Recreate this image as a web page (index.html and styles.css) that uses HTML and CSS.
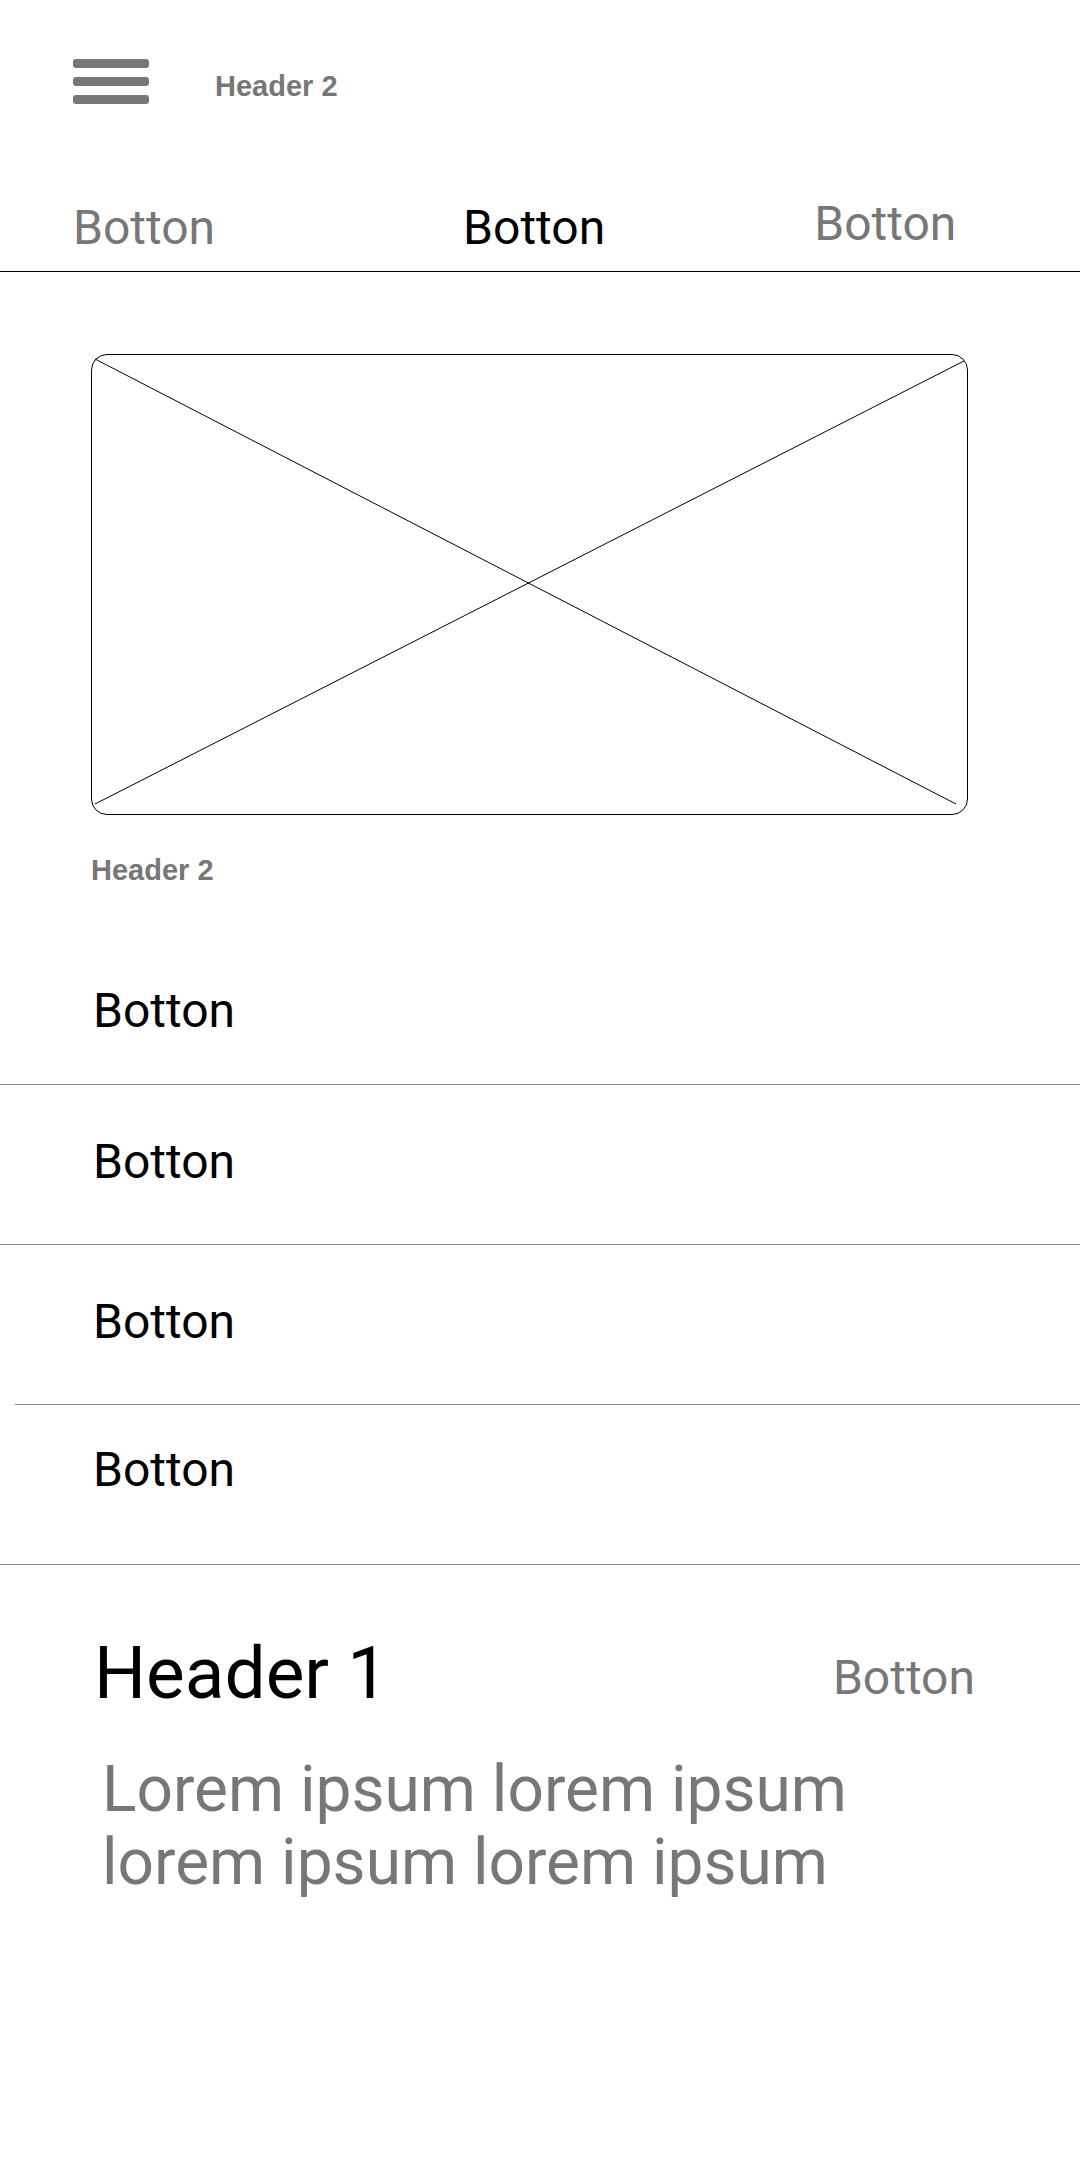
FILE: index.html
```html
<!DOCTYPE html>
<html>
<head>
  <meta charset="utf-8">
  <link rel="stylesheet" href="styles.css">
</head>
<body>
  <div class="header">
    <div class="menu-btn">
      <span></span>
      <span></span>
      <span></span>
    </div>
    <h2 class="header-title">Header 2</h2>
  </div>

  <div class="tabs">
    <span class="tab">Botton</span>
    <span class="tab tab-current">Botton</span>
    <span class="tab tab-last">Botton</span>
  </div>

  <div class="placeholder">
    <svg viewBox="0 0 877 461" preserveAspectRatio="none">
      <line x1="3" y1="4" x2="866" y2="451" />
      <line x1="3" y1="451" x2="874" y2="6" />
    </svg>
  </div>
  <h2 class="caption">Header 2</h2>

  <div class="list">
    <div class="list-row">Botton</div>
    <div class="list-row">Botton</div>
    <div class="list-row list-row-inset">Botton</div>
    <div class="list-row">Botton</div>
  </div>

  <div class="section">
    <div class="section-head">
      <h1>Header 1</h1>
      <span class="section-link">Botton</span>
    </div>
    <p class="section-text">Lorem ipsum lorem ipsum lorem ipsum lorem ipsum</p>
  </div>
</body>
</html>
```

FILE: styles.css
```css
body {
  width: 1080px;
  margin: 0;
  padding: 0;
  font-family: Roboto, "Noto Sans", sans-serif;
  background: #fff;
  color: #000;
}

.header {
  display: flex;
  align-items: center;
  padding: 59px 0 0 73px;
}

.menu-btn {
  display: flex;
  flex-direction: column;
  gap: 9px;
  width: 76px;
  margin-right: 66px;
}

.menu-btn span {
  display: block;
  height: 9px;
  border-radius: 3px;
  background: #777;
}

.header-title,
.caption {
  margin: 0;
  font-family: "Liberation Sans", Arial, sans-serif;
  font-size: 29px;
  font-weight: 700;
  line-height: 34px;
  color: #777;
}

.header-title {
  margin-top: 8px;
}

.tabs {
  display: flex;
  align-items: flex-end;
  padding: 92px 0 15px 73px;
  border-bottom: 1px solid #000;
}

.tab {
  font-size: 48px;
  line-height: 56px;
  color: #777;
}

.tab-current {
  color: #000;
  margin: 0 209px 0 248px;
}

.tab-last {
  padding-bottom: 4px;
}

.placeholder {
  box-sizing: border-box;
  width: 877px;
  height: 461px;
  margin: 82px 0 0 91px;
  border: 1px solid #000;
  border-radius: 16px;
}

.placeholder svg {
  display: block;
  width: 100%;
  height: 100%;
}

.placeholder line {
  stroke: #000;
  stroke-width: 1;
  vector-effect: non-scaling-stroke;
}

.caption {
  margin: 38px 0 0 91px;
}

.list {
  margin-top: 54px;
}

.list-row {
  padding: 49px 0 54px 93px;
  font-size: 48px;
  line-height: 56px;
  border-bottom: 1px solid #888;
}

.list-row:first-child {
  padding: 42px 0 45px 93px;
}

.list-row:last-child {
  padding: 37px 0 66px 93px;
}

.list-row-inset {
  margin-left: 15px;
  padding-left: 78px;
}

.section {
  padding: 64px 105px 0 94px;
}

.section-head {
  display: flex;
  align-items: center;
  justify-content: space-between;
}

.section-head h1 {
  margin: 0;
  font-size: 73px;
  font-weight: 400;
  line-height: 88px;
}

.section-link {
  margin-top: 10px;
  font-size: 48px;
  line-height: 56px;
  color: #777;
}

.section-text {
  margin: 36px 0 0 8px;
  font-size: 64px;
  line-height: 73px;
  color: #777;
}
```
